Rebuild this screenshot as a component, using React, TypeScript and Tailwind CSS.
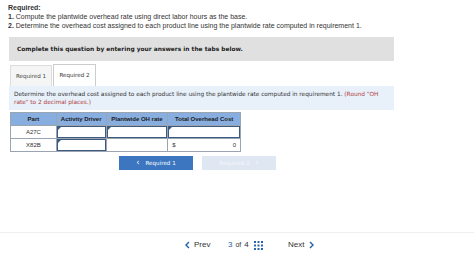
import React from 'react';

const sans = { fontFamily: '"Liberation Sans", Arial, sans-serif' };
const verdana = { fontFamily: '"DejaVu Sans", Verdana, sans-serif' };

const Cell: React.FC<{ w: string; input?: boolean; children?: React.ReactNode; className?: string }> = ({ w, input, children, className = '' }) => (
    <div className={`${w} h-[12px] border-r border-[#9aa5b1] relative flex items-center ${className}`}>
        {input && (
            <div className="absolute inset-0 border border-[#3d5a80] bg-white">
                <div className="absolute left-0 top-0 w-0 h-0 border-t-[3px] border-r-[3px] border-t-[#3d5a80] border-r-transparent" />
            </div>
        )}
        {children}
    </div>
);

export default function App() {
    return (
        <div className="w-[474px] h-[259px] bg-white relative overflow-hidden text-[#333]">
            {/* Requirements */}
            <div className="pl-[8px] pt-[3px] text-[7px] leading-[9px] text-[#333]" style={sans}>
                <p className="font-bold">Required:</p>
                <p><span className="font-bold">1.</span> Compute the plantwide overhead rate using direct labor hours as the base.</p>
                <p><span className="font-bold">2.</span> Determine the overhead cost assigned to each product line using the plantwide rate computed in requirement 1.</p>
            </div>

            <div className="ml-[9px] mt-[7px] w-[385px] h-[24px] bg-[#e0e0e0] flex items-center pl-[8px]" style={verdana}>
                <span className="text-[5.9px] font-bold text-[#222]">Complete this question by entering your answers in the tabs below.</span>
            </div>

            {/* Tabs */}
            <div className="ml-[10px] mt-[3px] flex items-end h-[22px]" style={verdana}>
                <div className="w-[42px] h-[21px] bg-[#f5f5f5] border border-[#ddd] border-b-0 flex items-center justify-center text-[5.6px] text-[#444]">Required 1</div>
                <div className="w-[43px] h-[22px] bg-white border border-[#ccc] border-b-0 ml-[1px] flex items-center justify-center text-[5.6px] text-[#333]">Required 2</div>
            </div>

            <div className="ml-[9px] w-[385px] h-[24px] bg-[#e8f0fa] px-[5px] pt-[4px] text-[5.8px] leading-[8px]" style={verdana}>
                <p className="text-[#333]">
                    Determine the overhead cost assigned to each product line using the plantwide rate computed in requirement 1.{' '}
                    <span className="text-[#b0413e]">(Round "OH rate" to 2 decimal places.)</span>
                </p>
            </div>

            {/* Table */}
            <div className="ml-[10px] mt-[2px] w-[231px] border-l border-t border-[#9aa5b1] text-[6px]" style={sans}>
                <div className="flex bg-[#88aee0] font-bold text-[#1a1a1a] border-b border-[#9aa5b1]">
                    <Cell w="w-[46px]" className="justify-center">Part</Cell>
                    <Cell w="w-[50px]" className="justify-center">Activity Driver</Cell>
                    <Cell w="w-[62px]" className="justify-center">Plantwide OH rate</Cell>
                    <Cell w="w-[73px]" className="justify-center">Total Overhead Cost</Cell>
                </div>
                <div className="flex border-b border-[#9aa5b1]">
                    <Cell w="w-[46px]" className="justify-center">A27C</Cell>
                    <Cell w="w-[50px]" input />
                    <Cell w="w-[62px]" input />
                    <Cell w="w-[73px]" input />
                </div>
                <div className="flex border-b border-[#9aa5b1]">
                    <Cell w="w-[46px]" className="justify-center">X82B</Cell>
                    <Cell w="w-[50px]" input />
                    <Cell w="w-[62px]" />
                    <Cell w="w-[73px]" className="justify-between px-[4px]">
                        <span>$</span>
                        <span>0</span>
                    </Cell>
                </div>
            </div>

            {/* Buttons */}
            <div className="ml-[119px] mt-[4px] flex gap-[9px] text-[5.6px]" style={verdana}>
                <div className="w-[74px] h-[14px] bg-[#3c76c0] text-white flex items-center justify-center gap-[6px]">
                    <span className="text-[8px] leading-none">‹</span>
                    <span>Required 1</span>
                </div>
                <div className="w-[74px] h-[14px] bg-[#dfe7f2] text-[#f4f7fb] flex items-center justify-center gap-[6px]">
                    <span>Required 2</span>
                    <span className="text-[8px] leading-none">›</span>
                </div>
            </div>

            {/* Bottom nav */}
            <div className="absolute left-0 right-0 top-[232px] border-t border-[#f0f0f0]" />
            <div className="absolute left-[185px] top-[238px] flex items-center h-[14px] text-[8px] text-[#333]" style={sans}>
                <div className="flex items-center gap-[4px] w-[43px]">
                    <svg width="5" height="8" viewBox="0 0 5 8"><path d="M4 1 L1 4 L4 7" stroke="#1f5fa8" strokeWidth="1.4" fill="none" /></svg>
                    <span>Prev</span>
                </div>
                <div className="flex items-center gap-[5px] w-[60px]">
                    <span className="flex items-baseline gap-[3px]">
                        <span className="text-[#1f5fa8]">3</span>
                        <span className="text-[7px]">of</span>
                        <span>4</span>
                    </span>
                    <svg width="9" height="9" viewBox="0 0 9 9">
                        {[0, 3.5, 7].map((y) => [0, 3.5, 7].map((x) => <rect key={`${x}-${y}`} x={x} y={y} width="2" height="2" fill="#2a63b0" />))}
                    </svg>
                </div>
                <div className="flex items-center gap-[5px]">
                    <span>Next</span>
                    <svg width="5" height="8" viewBox="0 0 5 8"><path d="M1 1 L4 4 L1 7" stroke="#1f5fa8" strokeWidth="1.4" fill="none" /></svg>
                </div>
            </div>
        </div>
    );
}
